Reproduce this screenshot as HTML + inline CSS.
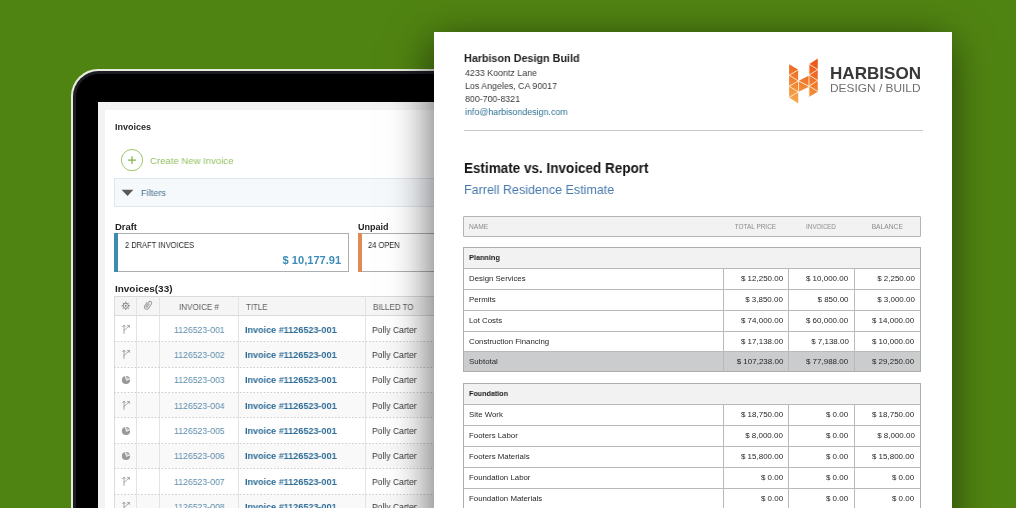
<!DOCTYPE html>
<html lang="en">
<head>
<meta charset="utf-8">
<title>Estimate vs. Invoiced Report</title>
<style>
html,body{margin:0;padding:0}
body{width:1016px;height:508px;overflow:hidden;position:relative;background:#508412;font-family:"Liberation Sans",sans-serif}
.t{position:absolute;white-space:nowrap;line-height:1;will-change:transform;font-family:"Liberation Sans",sans-serif}
.abs{position:absolute}
#tablet{position:absolute;left:71.3px;top:69.3px;width:600px;height:520px;border-radius:27px 0 0 0;background:#e6ebdc}
#ring{position:absolute;left:1.8px;top:1.7px;right:0;bottom:0;border-radius:25.5px 0 0 0;background:#1c1c23}
#bezel{position:absolute;left:4.6px;top:4.4px;right:0;bottom:0;border-radius:22.5px 0 0 0;background:#000}
#screen{position:absolute;left:98px;top:102px;width:400px;height:420px;background:#f3f3f3;overflow:hidden}
#panel{position:absolute;left:7px;top:8px;width:400px;height:420px;background:#fff}
#paper{position:absolute;left:434px;top:31.5px;width:518px;height:520px;background:#fff;box-shadow:-3px 10px 40px rgba(0,0,0,.58)}
.hl{position:absolute;height:1px;background:#b9b9b9}
.vl{position:absolute;width:1px;background:#b9b9b9}
.box{position:absolute;box-sizing:border-box;border:1px solid #b4b4b4}
</style>
</head>
<body>

<div id="tablet"><div id="ring"></div><div id="bezel"></div></div>

<div id="screen">
  <div id="panel"></div>
  <!-- create new invoice icon -->
  <svg class="abs" style="left:20.5px;top:45px" width="26" height="26" viewBox="0 0 26 26">
    <circle cx="13" cy="13.1" r="10.6" fill="#fff" stroke="#97c266" stroke-width="0.95"/>
    <path d="M13 9.2v7.8M9.1 13.1h7.8" stroke="#7fb046" stroke-width="1.2" fill="none"/>
  </svg>
  <!-- filters bar -->
  <div class="box" style="left:16px;top:76px;width:400px;height:29px;background:#f6f9fc;border-color:#dfe6ed"></div>
  <svg class="abs" style="left:23px;top:86.9px" width="14" height="9" viewBox="0 0 14 9"><path d="M0.600 0.700h11.800l-5.900 6.400z" fill="#585858"/></svg>
  <!-- draft / unpaid cards -->
  <div class="box" style="left:16px;top:131px;width:235px;height:39px;background:#fff;border-color:#abafb3"></div>
  <div class="abs" style="left:16px;top:131px;width:4px;height:39px;background:#3e8cad"></div>
  <div class="box" style="left:260px;top:131px;width:200px;height:39px;background:#fff;border-color:#abafb3"></div>
  <div class="abs" style="left:260px;top:131px;width:4px;height:39px;background:#e08a56"></div>
  <!-- invoice table -->
  <div class="abs" style="left:16px;top:194px;width:400px;height:19.5px;background:#f5f5f5"></div>
  <div class="hl" style="left:16px;top:194px;width:400px;background:#d9d9d9"></div>
  <div class="hl" style="left:16px;top:213px;width:400px;background:#d9d9d9"></div>
  <div class="abs" style="left:17px;top:240px;width:400px;height:25px;background:#f9f9f9"></div>
<div class="abs" style="left:17px;top:291px;width:400px;height:24px;background:#f9f9f9"></div>
<div class="abs" style="left:17px;top:342px;width:400px;height:24px;background:#f9f9f9"></div>
<div class="abs" style="left:17px;top:393px;width:400px;height:24px;background:#f9f9f9"></div>

  <div class="vl" style="left:16px;top:194px;height:330px;background:#dcdcdc"></div>
  <div class="vl" style="left:38px;top:194px;height:330px;background:#e3e3e3"></div>
  <div class="vl" style="left:61px;top:194px;height:330px;background:#e3e3e3"></div>
  <div class="vl" style="left:140px;top:194px;height:330px;background:#e3e3e3"></div>
  <div class="vl" style="left:267px;top:194px;height:330px;background:#e3e3e3"></div>
  <svg class="abs" style="left:16px;top:0" width="400" height="420" viewBox="0 0 400 420"><g stroke="#cdcdcd" stroke-width="1" stroke-dasharray="1.7 1.7"><line x1="0" y1="239.5" x2="400" y2="239.5"/><line x1="0" y1="265.5" x2="400" y2="265.5"/><line x1="0" y1="290.5" x2="400" y2="290.5"/><line x1="0" y1="315.5" x2="400" y2="315.5"/><line x1="0" y1="341.5" x2="400" y2="341.5"/><line x1="0" y1="366.5" x2="400" y2="366.5"/><line x1="0" y1="392.5" x2="400" y2="392.5"/><line x1="0" y1="417.5" x2="400" y2="417.5"/></g></svg>

  <svg class="abs" style="left:22.80px;top:222.00px" width="10" height="11" viewBox="0 0 10 11"><path d="M3 9.500V1.300M1.600 2.700L3 1.200l1.400 1.500M3 6.600L8.300 1.700M6.500 1.500l1.900 .1-.1 1.900" fill="none" stroke="#8c8c8c" stroke-width="0.75" stroke-linejoin="round" stroke-linecap="round"/></svg>
<svg class="abs" style="left:22.80px;top:247.35px" width="10" height="11" viewBox="0 0 10 11"><path d="M3 9.500V1.300M1.600 2.700L3 1.200l1.400 1.500M3 6.600L8.300 1.700M6.500 1.500l1.900 .1-.1 1.900" fill="none" stroke="#8c8c8c" stroke-width="0.75" stroke-linejoin="round" stroke-linecap="round"/></svg>
<svg class="abs" style="left:23.05px;top:272.85px" width="10" height="10" viewBox="0 0 10 10"><circle cx="5" cy="5" r="4.1" fill="#989898"/><path d="M5.600 5.400L3.900 0.800 9.300 3.700z" fill="#c4c4c4"/><path d="M3.900 0.600L5.600 5.400 9.400 3.600" fill="none" stroke="#fff" stroke-width="0.8"/></svg>
<svg class="abs" style="left:22.80px;top:298.05px" width="10" height="11" viewBox="0 0 10 11"><path d="M3 9.500V1.300M1.600 2.700L3 1.200l1.400 1.500M3 6.600L8.300 1.700M6.500 1.500l1.900 .1-.1 1.900" fill="none" stroke="#8c8c8c" stroke-width="0.75" stroke-linejoin="round" stroke-linecap="round"/></svg>
<svg class="abs" style="left:23.05px;top:323.55px" width="10" height="10" viewBox="0 0 10 10"><circle cx="5" cy="5" r="4.1" fill="#989898"/><path d="M5.600 5.400L3.900 0.800 9.300 3.700z" fill="#c4c4c4"/><path d="M3.900 0.600L5.600 5.400 9.400 3.600" fill="none" stroke="#fff" stroke-width="0.8"/></svg>
<svg class="abs" style="left:23.05px;top:348.90px" width="10" height="10" viewBox="0 0 10 10"><circle cx="5" cy="5" r="4.1" fill="#989898"/><path d="M5.600 5.400L3.900 0.800 9.300 3.700z" fill="#c4c4c4"/><path d="M3.900 0.600L5.600 5.400 9.400 3.600" fill="none" stroke="#fff" stroke-width="0.8"/></svg>
<svg class="abs" style="left:22.80px;top:374.10px" width="10" height="11" viewBox="0 0 10 11"><path d="M3 9.500V1.300M1.600 2.700L3 1.200l1.400 1.500M3 6.600L8.300 1.700M6.500 1.500l1.900 .1-.1 1.900" fill="none" stroke="#8c8c8c" stroke-width="0.75" stroke-linejoin="round" stroke-linecap="round"/></svg>
<svg class="abs" style="left:22.80px;top:399.45px" width="10" height="11" viewBox="0 0 10 11"><path d="M3 9.500V1.300M1.600 2.700L3 1.200l1.400 1.500M3 6.600L8.300 1.700M6.500 1.500l1.900 .1-.1 1.900" fill="none" stroke="#8c8c8c" stroke-width="0.75" stroke-linejoin="round" stroke-linecap="round"/></svg>
<svg class="abs" style="left:23.00px;top:198.70px" width="9.6" height="9.6" viewBox="0 0 10 10"><circle cx="5" cy="5" r="2.7" fill="none" stroke="#808080" stroke-width="1"/><circle cx="5" cy="5" r="1" fill="#808080"/><path d="M5 .6v1.6M5 7.8v1.6M.6 5h1.6M7.8 5h1.6M1.9 1.9l1.1 1.1M7 7l1.1 1.1M8.1 1.9L7 3M3 7L1.9 8.1" stroke="#808080" stroke-width="1" fill="none"/></svg>
<svg class="abs" style="left:43.90px;top:197.30px" width="12" height="12" viewBox="-6 -6 12 12"><path transform="rotate(33)" d="M-2.300 -1.500V2.300a2.300 2.300 0 0 0 4.600 0V-2.800a1.600 1.600 0 0 0 -3.200 0V2a.7 .7 0 0 0 1.400 0V-1.400" fill="none" stroke="#9a9a9a" stroke-width="0.95" stroke-linecap="round"/></svg>

<span class="t" style="left:16.50px;top:20.50px;font-size:9.0px;font-weight:700;color:#2b2b2b">Invoices</span>
<span class="t" style="left:51.50px;top:53.66px;font-size:9.7px;font-weight:400;color:#93c060;transform:scaleX(0.9876);transform-origin:0 50%">Create New Invoice</span>
<span class="t" style="left:42.50px;top:85.96px;font-size:9.5px;font-weight:400;color:#486f8c;transform:scaleX(0.9662);transform-origin:0 50%">Filters</span>
<span class="t" style="left:16.50px;top:121.00px;font-size:9.0px;font-weight:700;color:#1f1f1f;transform:scaleX(1.0468);transform-origin:0 50%">Draft</span>
<span class="t" style="left:260.30px;top:121.00px;font-size:9.0px;font-weight:700;color:#1f1f1f">Unpaid</span>
<span class="t" style="left:26.50px;top:139.10px;font-size:8.6px;font-weight:400;color:#262626;transform:scaleX(0.8720);transform-origin:0 50%">2 DRAFT INVOICES</span>
<span class="t" style="left:270.30px;top:139.10px;font-size:8.6px;font-weight:400;color:#262626;transform:scaleX(0.8730);transform-origin:0 50%">24 OPEN</span>
<span class="t" style="left:184.88px;top:152.63px;font-size:11.0px;font-weight:700;color:#3c8db8;transform:scaleX(1.0065);transform-origin:100% 50%">$ 10,177.91</span>
<span class="t" style="left:16.50px;top:182.96px;font-size:9.3px;font-weight:700;color:#1f1f1f;transform:scaleX(1.0698);transform-origin:0 50%">Invoices(33)</span>
<span class="t" style="left:80.50px;top:200.85px;font-size:8.5px;font-weight:400;color:#5c5c5c;transform:scaleX(0.9513);transform-origin:0 50%">INVOICE #</span>
<span class="t" style="left:147.50px;top:200.85px;font-size:8.5px;font-weight:400;color:#5c5c5c;transform:scaleX(0.9285);transform-origin:0 50%">TITLE</span>
<span class="t" style="left:274.50px;top:200.85px;font-size:8.5px;font-weight:400;color:#5c5c5c;transform:scaleX(0.9385);transform-origin:0 50%">BILLED TO</span>
<span class="t" style="left:75.60px;top:222.61px;font-size:9.4px;font-weight:400;color:#5c8bab;transform:scaleX(0.9289);transform-origin:0 50%">1126523-001</span>
<span class="t" style="left:146.70px;top:222.61px;font-size:9.4px;font-weight:700;color:#2c6b96;transform:scaleX(0.9644);transform-origin:0 50%">Invoice #1126523-001</span>
<span class="t" style="left:273.90px;top:222.61px;font-size:9.4px;font-weight:400;color:#383838;transform:scaleX(0.9105);transform-origin:0 50%">Polly Carter</span>
<span class="t" style="left:75.60px;top:247.96px;font-size:9.4px;font-weight:400;color:#5c8bab;transform:scaleX(0.9289);transform-origin:0 50%">1126523-002</span>
<span class="t" style="left:146.70px;top:247.96px;font-size:9.4px;font-weight:700;color:#2c6b96;transform:scaleX(0.9644);transform-origin:0 50%">Invoice #1126523-001</span>
<span class="t" style="left:273.90px;top:247.96px;font-size:9.4px;font-weight:400;color:#383838;transform:scaleX(0.9105);transform-origin:0 50%">Polly Carter</span>
<span class="t" style="left:75.60px;top:273.31px;font-size:9.4px;font-weight:400;color:#5c8bab;transform:scaleX(0.9289);transform-origin:0 50%">1126523-003</span>
<span class="t" style="left:146.70px;top:273.31px;font-size:9.4px;font-weight:700;color:#2c6b96;transform:scaleX(0.9644);transform-origin:0 50%">Invoice #1126523-001</span>
<span class="t" style="left:273.90px;top:273.31px;font-size:9.4px;font-weight:400;color:#383838;transform:scaleX(0.9105);transform-origin:0 50%">Polly Carter</span>
<span class="t" style="left:75.60px;top:298.66px;font-size:9.4px;font-weight:400;color:#5c8bab;transform:scaleX(0.9289);transform-origin:0 50%">1126523-004</span>
<span class="t" style="left:146.70px;top:298.66px;font-size:9.4px;font-weight:700;color:#2c6b96;transform:scaleX(0.9644);transform-origin:0 50%">Invoice #1126523-001</span>
<span class="t" style="left:273.90px;top:298.66px;font-size:9.4px;font-weight:400;color:#383838;transform:scaleX(0.9105);transform-origin:0 50%">Polly Carter</span>
<span class="t" style="left:75.60px;top:324.01px;font-size:9.4px;font-weight:400;color:#5c8bab;transform:scaleX(0.9289);transform-origin:0 50%">1126523-005</span>
<span class="t" style="left:146.70px;top:324.01px;font-size:9.4px;font-weight:700;color:#2c6b96;transform:scaleX(0.9644);transform-origin:0 50%">Invoice #1126523-001</span>
<span class="t" style="left:273.90px;top:324.01px;font-size:9.4px;font-weight:400;color:#383838;transform:scaleX(0.9105);transform-origin:0 50%">Polly Carter</span>
<span class="t" style="left:75.60px;top:349.36px;font-size:9.4px;font-weight:400;color:#5c8bab;transform:scaleX(0.9289);transform-origin:0 50%">1126523-006</span>
<span class="t" style="left:146.70px;top:349.36px;font-size:9.4px;font-weight:700;color:#2c6b96;transform:scaleX(0.9644);transform-origin:0 50%">Invoice #1126523-001</span>
<span class="t" style="left:273.90px;top:349.36px;font-size:9.4px;font-weight:400;color:#383838;transform:scaleX(0.9105);transform-origin:0 50%">Polly Carter</span>
<span class="t" style="left:75.60px;top:374.71px;font-size:9.4px;font-weight:400;color:#5c8bab;transform:scaleX(0.9289);transform-origin:0 50%">1126523-007</span>
<span class="t" style="left:146.70px;top:374.71px;font-size:9.4px;font-weight:700;color:#2c6b96;transform:scaleX(0.9644);transform-origin:0 50%">Invoice #1126523-001</span>
<span class="t" style="left:273.90px;top:374.71px;font-size:9.4px;font-weight:400;color:#383838;transform:scaleX(0.9105);transform-origin:0 50%">Polly Carter</span>
<span class="t" style="left:75.60px;top:400.06px;font-size:9.4px;font-weight:400;color:#5c8bab;transform:scaleX(0.9289);transform-origin:0 50%">1126523-008</span>
<span class="t" style="left:146.70px;top:400.06px;font-size:9.4px;font-weight:700;color:#2c6b96;transform:scaleX(0.9644);transform-origin:0 50%">Invoice #1126523-001</span>
<span class="t" style="left:273.90px;top:400.06px;font-size:9.4px;font-weight:400;color:#383838;transform:scaleX(0.9105);transform-origin:0 50%">Polly Carter</span>
</div>

<div id="paper">
  <!-- logo -->
  <svg class="abs" style="left:352px;top:22px" width="36" height="54" viewBox="786 53.5 36 54">
    <defs>
      <linearGradient id="lg" gradientUnits="userSpaceOnUse" x1="794" y1="104" x2="813" y2="58">
        <stop offset="0.05" stop-color="#f9a84e"/><stop offset="0.45" stop-color="#f08030"/><stop offset="0.95" stop-color="#ec5518"/>
      </linearGradient>
    </defs>
    <g fill="url(#lg)"><polygon points="789.12,63.72 798.32,69.35 798.32,102.90 789.12,96.97"/><polygon points="809.06,63.72 817.76,58.09 817.76,91.34 809.06,96.46"/><polygon points="798.3,80.4 809.1,75.0 809.1,86.0 798.3,91.4"/></g><g stroke="#ffeedd" stroke-width="0.9"><line x1="789.12" y1="74.77" x2="798.32" y2="80.39"/><line x1="789.12" y1="85.82" x2="798.32" y2="91.44"/><line x1="789.12" y1="74.77" x2="798.32" y2="69.35"/><line x1="789.12" y1="85.82" x2="798.32" y2="80.39"/><line x1="789.12" y1="96.86" x2="798.32" y2="91.44"/><line x1="809.06" y1="74.66" x2="817.76" y2="69.04"/><line x1="809.06" y1="85.61" x2="817.76" y2="79.98"/><line x1="809.06" y1="63.72" x2="817.76" y2="69.04"/><line x1="809.06" y1="74.66" x2="817.76" y2="79.98"/><line x1="809.06" y1="85.61" x2="817.76" y2="90.93"/><line x1="798.50" y1="80.40" x2="809.00" y2="86.00"/><line x1="798.55" y1="69.60" x2="798.55" y2="102.60"/><line x1="808.95" y1="63.60" x2="808.95" y2="96.60"/></g>
  </svg>
  <div class="hl" style="left:30px;top:98.5px;width:459px;background:#c9c9c9"></div>
  <!-- column header box -->
  <div class="box" style="left:29px;top:184.7px;width:458px;height:20.8px;background:#f2f2f2;border-radius:1px"></div>
  <div class="abs" style="left:29px;top:215.50px;width:458px;height:21px;background:#f2f2f2"></div>
<div class="abs" style="left:29px;top:319.60px;width:458px;height:20.50px;background:#cbccce"></div>
<div class="box" style="left:29px;top:215.50px;width:458px;height:125.00px;border-color:#adadad"></div>
<div class="hl" style="left:29px;top:236.40px;width:458px"></div>
<div class="hl" style="left:29px;top:257.30px;width:458px"></div>
<div class="hl" style="left:29px;top:278.20px;width:458px"></div>
<div class="hl" style="left:29px;top:299.10px;width:458px"></div>
<div class="hl" style="left:29px;top:319.60px;width:458px"></div>
<div class="vl" style="left:289.00px;top:236.40px;height:103.10px"></div>
<div class="vl" style="left:354.10px;top:236.40px;height:103.10px"></div>
<div class="vl" style="left:419.80px;top:236.40px;height:103.10px"></div>
<div class="abs" style="left:29px;top:351.70px;width:458px;height:21px;background:#f2f2f2"></div>
<div class="box" style="left:29px;top:351.70px;width:458px;height:147.30px;border-color:#adadad"></div>
<div class="hl" style="left:29px;top:372.60px;width:458px"></div>
<div class="hl" style="left:29px;top:393.50px;width:458px"></div>
<div class="hl" style="left:29px;top:414.40px;width:458px"></div>
<div class="hl" style="left:29px;top:435.30px;width:458px"></div>
<div class="hl" style="left:29px;top:456.20px;width:458px"></div>
<div class="hl" style="left:29px;top:477.10px;width:458px"></div>
<div class="vl" style="left:289.00px;top:372.60px;height:125.40px"></div>
<div class="vl" style="left:354.10px;top:372.60px;height:125.40px"></div>
<div class="vl" style="left:419.80px;top:372.60px;height:125.40px"></div>

<span class="t" style="left:30.00px;top:21.13px;font-size:11px;font-weight:700;color:#1e1e1e;transform:scaleX(0.9791);transform-origin:0 50%">Harbison Design Build</span>
<span class="t" style="left:31.00px;top:36.41px;font-size:9.6px;font-weight:400;color:#3a3a3a;transform:scaleX(0.9244);transform-origin:0 50%">4233 Koontz Lane</span>
<span class="t" style="left:31.00px;top:49.81px;font-size:9.6px;font-weight:400;color:#3a3a3a;transform:scaleX(0.9223);transform-origin:0 50%">Los Angeles, CA 90017</span>
<span class="t" style="left:31.00px;top:62.51px;font-size:9.6px;font-weight:400;color:#3a3a3a;transform:scaleX(0.9205);transform-origin:0 50%">800-700-8321</span>
<span class="t" style="left:31.00px;top:75.51px;font-size:9.6px;font-weight:400;color:#2f7396;transform:scaleX(0.9246);transform-origin:0 50%">info@harbisondesign.com</span>
<span class="t" style="left:29.80px;top:129.96px;font-size:14px;font-weight:700;color:#141414;transform:scaleX(0.9639);transform-origin:0 50%">Estimate vs. Invoiced Report</span>
<span class="t" style="left:29.80px;top:151.35px;font-size:13.2px;font-weight:400;color:#4779ad;transform:scaleX(0.9488);transform-origin:0 50%">Farrell Residence Estimate</span>
<span class="t" style="left:34.80px;top:192.07px;font-size:6.4px;font-weight:400;color:#8a8a8a;transform:scaleX(1.0396);transform-origin:0 50%">NAME</span>
<span class="t" style="left:301.22px;top:192.07px;font-size:6.4px;font-weight:400;color:#8a8a8a;transform:scaleX(1.0054);transform-origin:100% 50%">TOTAL PRICE</span>
<span class="t" style="left:371.39px;top:192.07px;font-size:6.4px;font-weight:400;color:#8a8a8a;transform:scaleX(0.9642);transform-origin:100% 50%">INVOICED</span>
<span class="t" style="left:439.16px;top:192.07px;font-size:6.4px;font-weight:400;color:#8a8a8a;transform:scaleX(1.0454);transform-origin:100% 50%">BALANCE</span>
<span class="t" style="left:396.00px;top:34.43px;font-size:15.7px;font-weight:700;color:#383838;transform:scaleX(1.0876);transform-origin:0 50%">HARBISON</span>
<span class="t" style="left:396.00px;top:52.77px;font-size:10.3px;font-weight:400;color:#6e6e6e;transform:scaleX(1.1545);transform-origin:0 50%">DESIGN / BUILD</span>
<span class="t" style="left:35.20px;top:222.49px;font-size:7.6px;font-weight:700;color:#1a1a1a;transform:scaleX(0.9606);transform-origin:0 50%">Planning</span>
<span class="t" style="left:35.00px;top:243.29px;font-size:7.6px;font-weight:400;color:#262626;transform:scaleX(1.0325);transform-origin:0 50%">Design Services</span>
<span class="t" style="left:308.88px;top:243.29px;font-size:7.6px;font-weight:400;color:#262626;transform:scaleX(1.0517);transform-origin:100% 50%">$ 12,250.00</span>
<span class="t" style="left:374.38px;top:243.29px;font-size:7.6px;font-weight:400;color:#262626;transform:scaleX(1.0517);transform-origin:100% 50%">$ 10,000.00</span>
<span class="t" style="left:444.59px;top:243.29px;font-size:7.6px;font-weight:400;color:#262626;transform:scaleX(1.0517);transform-origin:100% 50%">$ 2,250.00</span>
<span class="t" style="left:35.00px;top:264.19px;font-size:7.6px;font-weight:400;color:#262626;transform:scaleX(1.0325);transform-origin:0 50%">Permits</span>
<span class="t" style="left:313.09px;top:264.19px;font-size:7.6px;font-weight:400;color:#262626;transform:scaleX(1.0517);transform-origin:100% 50%">$ 3,850.00</span>
<span class="t" style="left:384.94px;top:264.19px;font-size:7.6px;font-weight:400;color:#262626;transform:scaleX(1.0517);transform-origin:100% 50%">$ 850.00</span>
<span class="t" style="left:444.59px;top:264.19px;font-size:7.6px;font-weight:400;color:#262626;transform:scaleX(1.0517);transform-origin:100% 50%">$ 3,000.00</span>
<span class="t" style="left:35.00px;top:285.09px;font-size:7.6px;font-weight:400;color:#262626;transform:scaleX(1.0325);transform-origin:0 50%">Lot Costs</span>
<span class="t" style="left:308.88px;top:285.09px;font-size:7.6px;font-weight:400;color:#262626;transform:scaleX(1.0517);transform-origin:100% 50%">$ 74,000.00</span>
<span class="t" style="left:374.38px;top:285.09px;font-size:7.6px;font-weight:400;color:#262626;transform:scaleX(1.0517);transform-origin:100% 50%">$ 60,000.00</span>
<span class="t" style="left:440.38px;top:285.09px;font-size:7.6px;font-weight:400;color:#262626;transform:scaleX(1.0517);transform-origin:100% 50%">$ 14,000.00</span>
<span class="t" style="left:35.00px;top:306.89px;font-size:7.6px;font-weight:400;color:#262626;transform:scaleX(1.0325);transform-origin:0 50%">Construction Financing</span>
<span class="t" style="left:308.88px;top:306.89px;font-size:7.6px;font-weight:400;color:#262626;transform:scaleX(1.0517);transform-origin:100% 50%">$ 17,138.00</span>
<span class="t" style="left:378.59px;top:306.89px;font-size:7.6px;font-weight:400;color:#262626;transform:scaleX(1.0517);transform-origin:100% 50%">$ 7,138.00</span>
<span class="t" style="left:440.38px;top:306.89px;font-size:7.6px;font-weight:400;color:#262626;transform:scaleX(1.0517);transform-origin:100% 50%">$ 10,000.00</span>
<span class="t" style="left:35.00px;top:326.89px;font-size:7.6px;font-weight:400;color:#262626;transform:scaleX(1.0325);transform-origin:0 50%">Subtotal</span>
<span class="t" style="left:304.66px;top:326.89px;font-size:7.6px;font-weight:400;color:#262626;transform:scaleX(1.0517);transform-origin:100% 50%">$ 107,238.00</span>
<span class="t" style="left:374.38px;top:326.89px;font-size:7.6px;font-weight:400;color:#262626;transform:scaleX(1.0517);transform-origin:100% 50%">$ 77,988.00</span>
<span class="t" style="left:440.38px;top:326.89px;font-size:7.6px;font-weight:400;color:#262626;transform:scaleX(1.0517);transform-origin:100% 50%">$ 29,250.00</span>
<span class="t" style="left:35.20px;top:358.69px;font-size:7.6px;font-weight:700;color:#1a1a1a;transform:scaleX(0.9433);transform-origin:0 50%">Foundation</span>
<span class="t" style="left:35.00px;top:379.49px;font-size:7.6px;font-weight:400;color:#262626;transform:scaleX(1.0325);transform-origin:0 50%">Site Work</span>
<span class="t" style="left:308.88px;top:379.49px;font-size:7.6px;font-weight:400;color:#262626;transform:scaleX(1.0517);transform-origin:100% 50%">$ 18,750.00</span>
<span class="t" style="left:393.38px;top:379.49px;font-size:7.6px;font-weight:400;color:#262626;transform:scaleX(1.0517);transform-origin:100% 50%">$ 0.00</span>
<span class="t" style="left:440.38px;top:379.49px;font-size:7.6px;font-weight:400;color:#262626;transform:scaleX(1.0517);transform-origin:100% 50%">$ 18,750.00</span>
<span class="t" style="left:35.00px;top:400.39px;font-size:7.6px;font-weight:400;color:#262626;transform:scaleX(1.0325);transform-origin:0 50%">Footers Labor</span>
<span class="t" style="left:313.09px;top:400.39px;font-size:7.6px;font-weight:400;color:#262626;transform:scaleX(1.0517);transform-origin:100% 50%">$ 8,000.00</span>
<span class="t" style="left:393.38px;top:400.39px;font-size:7.6px;font-weight:400;color:#262626;transform:scaleX(1.0517);transform-origin:100% 50%">$ 0.00</span>
<span class="t" style="left:444.59px;top:400.39px;font-size:7.6px;font-weight:400;color:#262626;transform:scaleX(1.0517);transform-origin:100% 50%">$ 8,000.00</span>
<span class="t" style="left:35.00px;top:421.29px;font-size:7.6px;font-weight:400;color:#262626;transform:scaleX(1.0325);transform-origin:0 50%">Footers Materials</span>
<span class="t" style="left:308.88px;top:421.29px;font-size:7.6px;font-weight:400;color:#262626;transform:scaleX(1.0517);transform-origin:100% 50%">$ 15,800.00</span>
<span class="t" style="left:393.38px;top:421.29px;font-size:7.6px;font-weight:400;color:#262626;transform:scaleX(1.0517);transform-origin:100% 50%">$ 0.00</span>
<span class="t" style="left:440.38px;top:421.29px;font-size:7.6px;font-weight:400;color:#262626;transform:scaleX(1.0517);transform-origin:100% 50%">$ 15,800.00</span>
<span class="t" style="left:35.00px;top:442.19px;font-size:7.6px;font-weight:400;color:#262626;transform:scaleX(1.0325);transform-origin:0 50%">Foundation Labor</span>
<span class="t" style="left:327.88px;top:442.19px;font-size:7.6px;font-weight:400;color:#262626;transform:scaleX(1.0517);transform-origin:100% 50%">$ 0.00</span>
<span class="t" style="left:393.38px;top:442.19px;font-size:7.6px;font-weight:400;color:#262626;transform:scaleX(1.0517);transform-origin:100% 50%">$ 0.00</span>
<span class="t" style="left:459.38px;top:442.19px;font-size:7.6px;font-weight:400;color:#262626;transform:scaleX(1.0517);transform-origin:100% 50%">$ 0.00</span>
<span class="t" style="left:35.00px;top:463.09px;font-size:7.6px;font-weight:400;color:#262626;transform:scaleX(1.0325);transform-origin:0 50%">Foundation Materials</span>
<span class="t" style="left:327.88px;top:463.09px;font-size:7.6px;font-weight:400;color:#262626;transform:scaleX(1.0517);transform-origin:100% 50%">$ 0.00</span>
<span class="t" style="left:393.38px;top:463.09px;font-size:7.6px;font-weight:400;color:#262626;transform:scaleX(1.0517);transform-origin:100% 50%">$ 0.00</span>
<span class="t" style="left:459.38px;top:463.09px;font-size:7.6px;font-weight:400;color:#262626;transform:scaleX(1.0517);transform-origin:100% 50%">$ 0.00</span>
</div>

</body>
</html>
